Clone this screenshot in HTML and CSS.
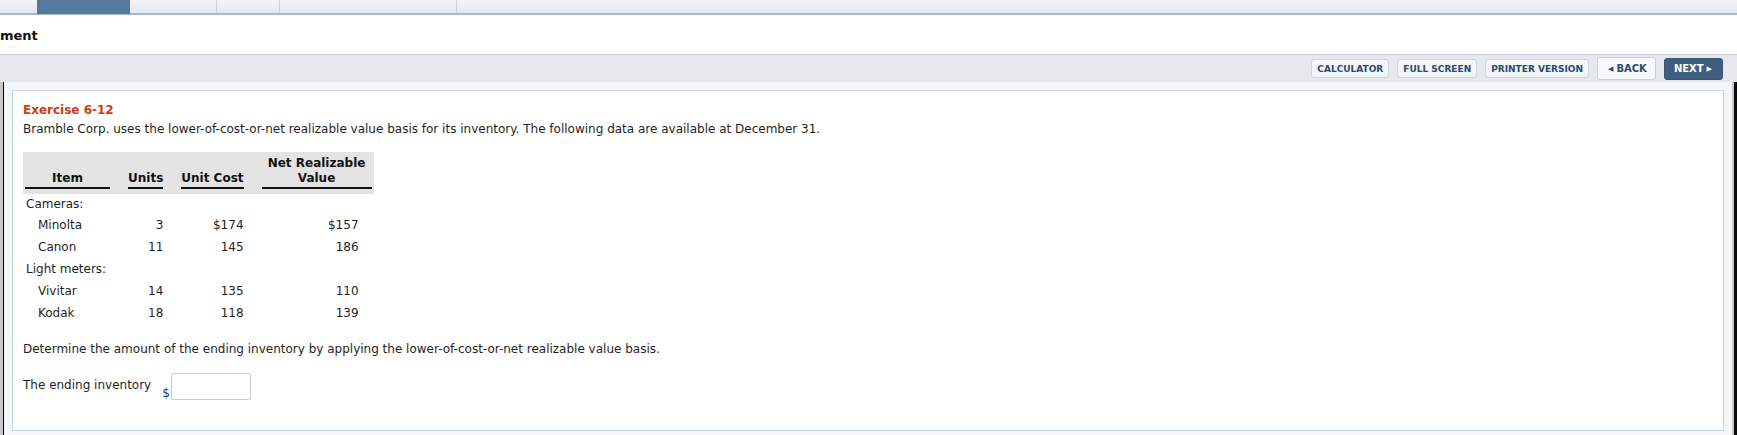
FILE: index.html
```html
<!DOCTYPE html>
<html>
<head>
<meta charset="utf-8">
<link rel="stylesheet" href="styles.css">
</head>
<body>
<div class="tabbar">
  <div class="tab tab-lead"></div>
  <div class="tab tab-active"></div>
  <div class="tab tab-2"></div>
  <div class="tab tab-3"></div>
  <div class="tab tab-4"></div>
</div>
<div class="titlebar"><span class="title-text">ment</span></div>
<div class="toolbar">
  <button class="btn">CALCULATOR</button>
  <button class="btn">FULL SCREEN</button>
  <button class="btn">PRINTER VERSION</button>
  <button class="btn btn-back"><span class="arrow">&#9664;</span>BACK</button>
  <button class="btn btn-next">NEXT<span class="arrow">&#9654;</span></button>
</div>
<div class="frame">
  <div class="frame-in">
    <div class="card">
      <div class="ex-title">Exercise 6-12</div>
      <p class="intro">Bramble Corp. uses the lower-of-cost-or-net realizable value basis for its inventory. The following data are available at December 31.</p>
      <table class="data">
        <thead>
          <tr>
            <th class="c-item"><span class="u">Item</span></th>
            <th class="c-units"><span class="u">Units</span></th>
            <th class="c-cost"><span class="u">Unit Cost</span></th>
            <th class="c-nrv"><span class="u">Net Realizable<br>Value</span></th>
          </tr>
        </thead>
        <tbody>
          <tr class="first"><td class="grp" colspan="4">Cameras:</td></tr>
          <tr><td class="sub">Minolta</td><td class="num">3</td><td class="num">$174</td><td class="num">$157</td></tr>
          <tr><td class="sub">Canon</td><td class="num">11</td><td class="num">145</td><td class="num">186</td></tr>
          <tr><td class="grp" colspan="4">Light meters:</td></tr>
          <tr><td class="sub">Vivitar</td><td class="num">14</td><td class="num">135</td><td class="num">110</td></tr>
          <tr><td class="sub">Kodak</td><td class="num">18</td><td class="num">118</td><td class="num">139</td></tr>
        </tbody>
      </table>
      <p class="question">Determine the amount of the ending inventory by applying the lower-of-cost-or-net realizable value basis.</p>
      <div class="answer">
        <span class="label">The ending inventory</span>
        <span class="dollar">$</span>
        <input class="field" type="text">
      </div>
    </div>
  </div>
</div>
</body>
</html>
```
FILE: styles.css
```css
html, body {
  margin: 0;
  padding: 0;
  background: #ffffff;
}
body {
  font-family: "DejaVu Sans", Verdana, sans-serif;
  font-size: 12px;
  color: #222;
  overflow: hidden;
}
.tabbar {
  display: flex;
  height: 13px;
  background: linear-gradient(#f2f4f9, #e2e7f0);
  border-bottom: 2px solid #a9b8c9;
}
.tab {
  height: 13px;
  box-sizing: border-box;
}
.tab-lead { width: 37px; }
.tab-active { width: 93px; background: #53799f; height: 14px; }
.tab-2 { width: 87px; border-right: 1px solid #c9d1dc; }
.tab-3 { width: 63px; border-right: 1px solid #c9d1dc; }
.tab-4 { width: 177px; border-right: 1px solid #c9d1dc; }
.titlebar {
  height: 39px;
  display: flex;
  align-items: center;
  background: #fff;
}
.title-text {
  font-weight: bold;
  font-size: 13px;
  color: #111;
  margin-top: 1px;
}
.toolbar {
  border-top: 1px solid #c9d1d9;
  background: #e5e9ee;
  height: 27px;
  display: flex;
  justify-content: flex-end;
  align-items: center;
  gap: 8px;
  padding-right: 14px;
}
.btn {
  font-family: "DejaVu Sans", Verdana, sans-serif;
  font-weight: bold;
  font-size: 9px;
  color: #2c4a6c;
  background: linear-gradient(#f6f8fa, #eef2f6);
  border: 1px solid #cdd6df;
  border-radius: 3px;
  height: 19px;
  padding: 0 5px;
  margin: 0;
  display: flex;
  align-items: center;
}
.btn-back {
  height: 23px;
  background: #f7f8fa;
  border-color: #c7cfd8;
  padding: 0 8px 0 7px;
  font-size: 10px;
}
.btn-next {
  height: 22px;
  background: #3f5d7c;
  border-color: #3a5775;
  color: #fff;
  padding: 0 7px 0 9px;
  font-size: 10px;
}
.arrow {
  font-size: 7px;
  margin: 0 3px;
}
.frame {
  height: 353px;
  background: #c8c8c8;
  padding-left: 3px;
  border-right: 3px solid #0a0a0a;
  box-sizing: border-box;
}
.frame-in {
  height: 100%;
  border-left: 1px solid #000;
  border-right: 2px solid #c8c8c8;
  background: #f4f7fa;
  padding: 8px 8px 0 8px;
  box-sizing: border-box;
}
.card {
  background: #fff;
  border: 1px solid #cad5e3;
  height: 341px;
  box-sizing: border-box;
  padding: 11px 10px 0 10px;
}
.ex-title {
  color: #c8400f;
  font-weight: bold;
  font-size: 12px;
  line-height: 16px;
}
.intro {
  margin: 4px 0 0 0;
  line-height: 15px;
  color: #1f1f1f;
}
.data {
  border-collapse: collapse;
  margin-top: 15px;
}
.data thead tr {
  background: #e3e3e3;
}
.data th {
  font-weight: bold;
  font-size: 12px;
  line-height: 15px;
  vertical-align: bottom;
  padding: 4px 2px 5px 2px;
  color: #111;
  white-space: nowrap;
}
.data th .u {
  display: block;
  border-bottom: 2px solid #111;
  padding-bottom: 1px;
}
.c-item { width: 85px; text-align: center; }
.c-units { width: 35px; padding-left: 16px !important; }
.c-cost { width: 62px; padding-left: 16px !important; }
.c-nrv { width: 110px; padding-left: 16px !important; }
.data td {
  height: 22px;
  padding: 0;
  line-height: 22px;
  color: #1f1f1f;
  white-space: nowrap;
}
.data tr.first td {
  height: 17px;
  line-height: 20px;
}
.grp { padding-left: 3px !important; }
.sub { padding-left: 15px !important; }
.num { text-align: right; padding-right: 2px !important; }
.data td:nth-child(4) { padding-right: 15px !important; }
.question {
  margin: 18px 0 0 0;
  line-height: 15px;
  color: #1f1f1f;
}
.answer {
  display: flex;
  align-items: flex-start;
  margin-top: 16px;
}
.label {
  line-height: 15px;
  margin-top: 5px;
  color: #1f1f1f;
}
.dollar {
  margin-left: 11px;
  margin-top: 14px;
  line-height: 13px;
  font-size: 12px;
  color: #1f3a66;
}
.field {
  width: 80px;
  height: 27px;
  box-sizing: border-box;
  border: 1px solid #cccccc;
  border-radius: 2px;
  margin: 0 0 0 1px;
  padding: 0;
  background: #fff;
}
```
